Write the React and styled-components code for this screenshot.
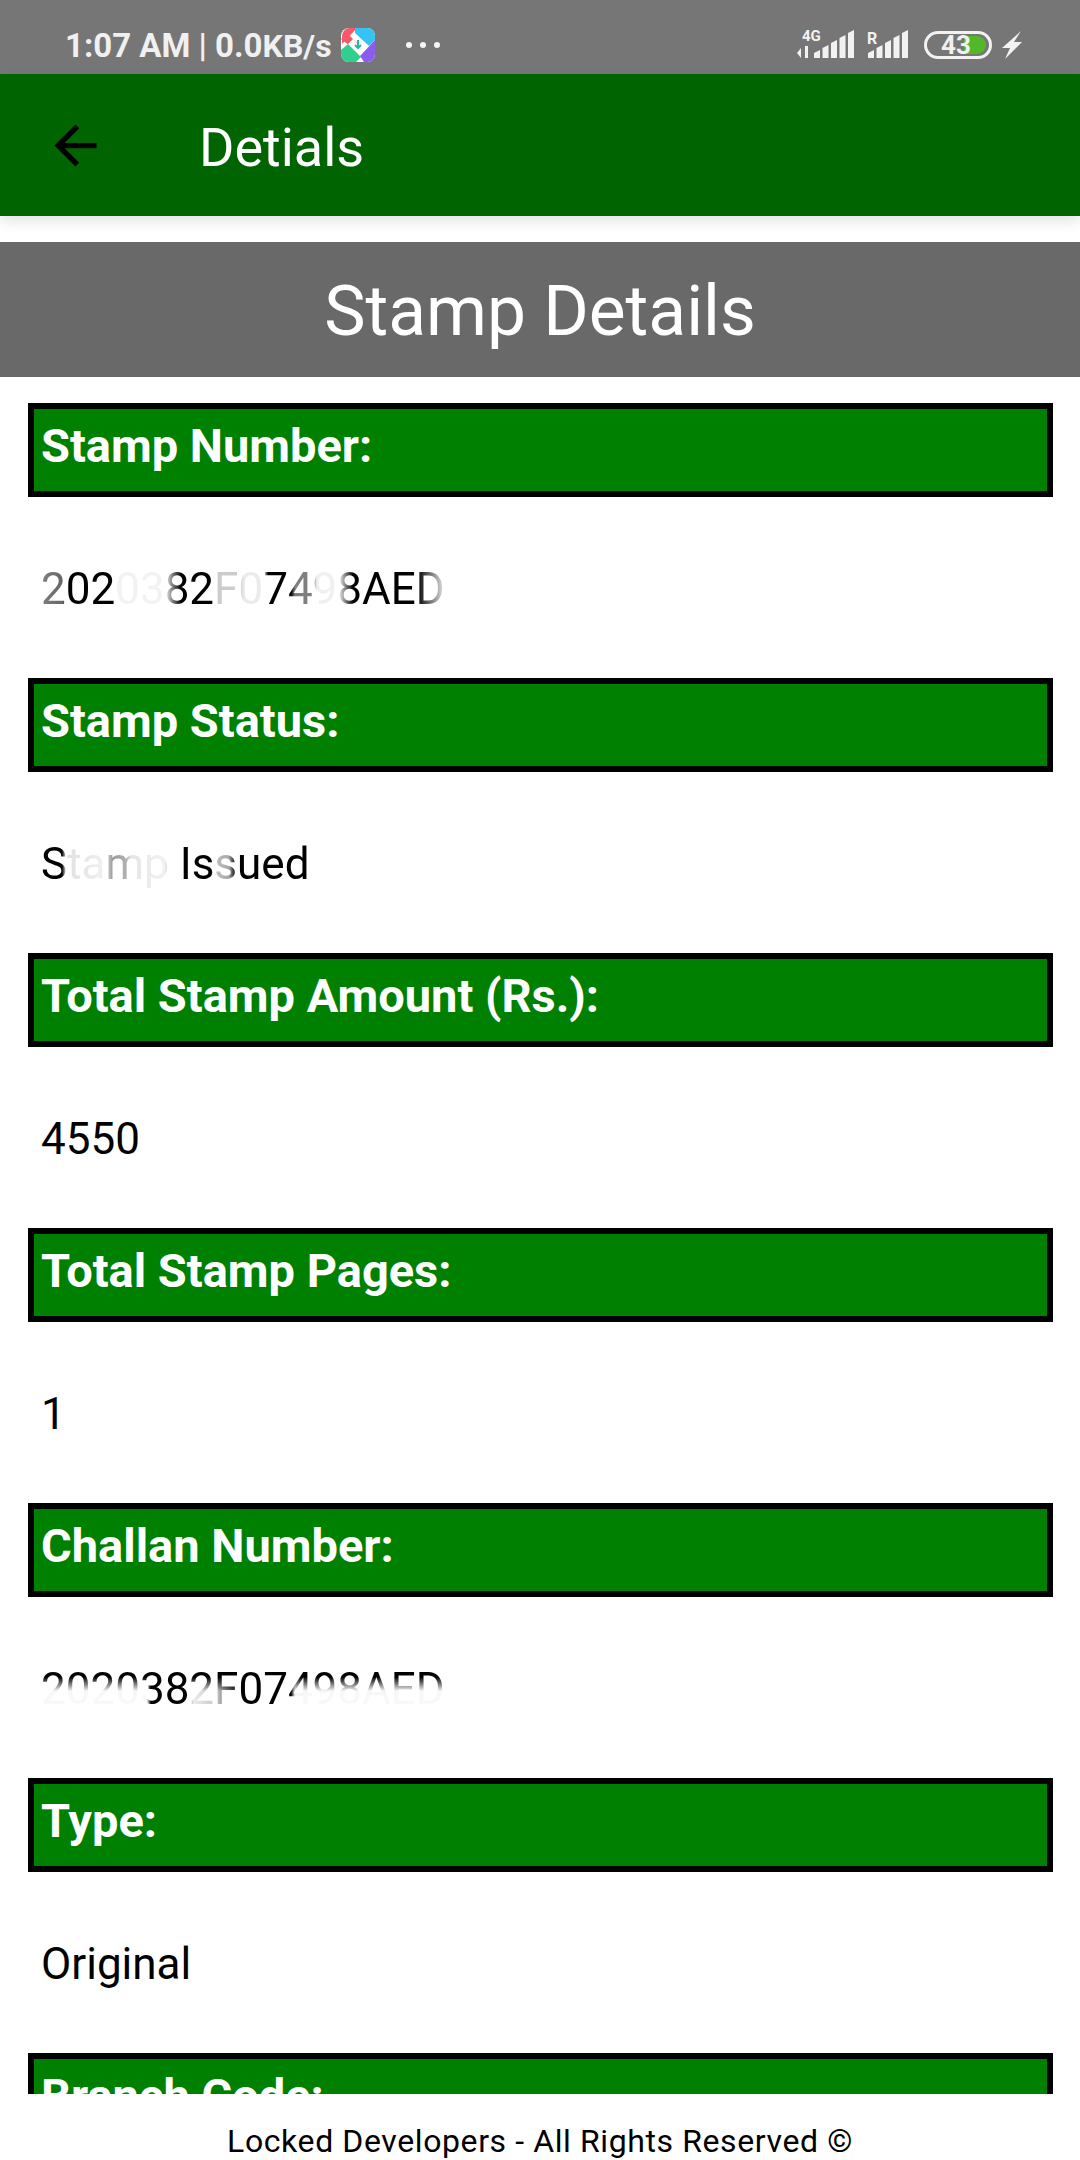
import React from "react"
import styled, { createGlobalStyle } from "styled-components"

const GlobalStyle = createGlobalStyle`
  html, body {
    margin: 0;
    padding: 0;
    background: #fff;
  }
  * {
    box-sizing: border-box;
  }
`

const Page = styled.div`
  width: 1080px;
  height: 2160px;
  display: flex;
  flex-direction: column;
  overflow: hidden;
  background: #fff;
  font-family: Roboto, "Liberation Sans", sans-serif;
`

const StatusBar = styled.div`
  height: 74px;
  flex: none;
  display: flex;
  align-items: center;
  justify-content: space-between;
  padding: 16px 58px 0 65px;
  background: #767676;
  color: #f0f0f0;
`

const StatusGroup = styled.div`
  display: flex;
  align-items: center;
`

const Clock = styled.span`
  font-size: 33px;
  font-weight: 700;
  white-space: nowrap;
`

const Speed = styled.span`
  font-size: 32px;
`

const AppIcon = styled.svg`
  width: 34px;
  height: 34px;
  margin-left: 9px;
`

const Dots = styled.svg`
  width: 34px;
  height: 8px;
  margin-left: 31px;
`

const SignalIcon = styled.svg`
  height: 30px;
  width: ${(p) => p.$width}px;
  margin-right: ${(p) => p.$gap}px;
  overflow: visible;
`

const Battery = styled.div`
  position: relative;
  width: 68px;
  height: 28px;
  border: 3px solid #f2f2f2;
  border-radius: 14px;
  display: flex;
  align-items: center;
  justify-content: center;
  font-size: 26px;
  font-weight: 700;
  margin-right: 10px;
  padding-right: 4px;
`

const BatteryFill = styled.span`
  position: absolute;
  top: 2px;
  bottom: 2px;
  right: 3px;
  width: 22px;
  border-radius: 0 10px 10px 0;
  background: #52b82a;
`

const BatteryText = styled.span`
  position: relative;
  line-height: 22px;
`

const Bolt = styled.svg`
  width: 20px;
  height: 28px;
`

const Header = styled.header`
  position: relative;
  height: 142px;
  flex: none;
  display: flex;
  align-items: center;
  padding-left: 44px;
  background: darkgreen;
  box-shadow: 0 6px 12px rgba(0, 0, 0, 0.1);
`

const BackArrow = styled.svg`
  width: 63px;
  height: 63px;
  flex: none;
  fill: #000;
`

const HeaderTitle = styled.h1`
  margin: 4px 0 0 92px;
  font-size: 54px;
  font-weight: 400;
  color: #fff;
`

const Banner = styled.div`
  margin-top: 26px;
  height: 135px;
  flex: none;
  display: flex;
  align-items: center;
  justify-content: center;
  padding-top: 4px;
  background: dimgray;
  color: #fff;
  font-size: 69.5px;
  font-weight: 400;
`

const Scroller = styled.main`
  flex: 1;
  min-height: 0;
  overflow: hidden;
  padding: 26px 27px 0 28px;
`

const Label = styled.div`
  height: 94px;
  border: 6px solid #000;
  background: green;
  color: #fff;
  padding: 6px 7px 0;
  font-size: 47px;
  font-weight: 700;
  line-height: 62px;
`

const ValueRow = styled.div`
  height: 181px;
  display: flex;
  align-items: center;
  padding: 2px 0 0 13px;
`

const Value = styled.span`
  font-size: 44px;
  line-height: 52px;
  color: #000;
  mask-image: ${(p) => p.$mask || "none"};
`

const Footer = styled.footer`
  height: 66px;
  flex: none;
  display: flex;
  align-items: flex-end;
  justify-content: center;
  padding-bottom: 1px;
  background: #fff;
  color: #000;
  font-size: 32px;
  letter-spacing: 0.6px;
  line-height: 36px;
`

// the reference has patches rubbed out of these values, masks rebuild that
const fade = (stops) =>
  `linear-gradient(to right, ${stops
    .map(([x, a]) => `rgba(0,0,0,${a}) ${x}px`)
    .join(", ")})`

const stampMask = fade([
  [0, 0.5], [22, 0.6], [25, 1], [73, 1], [77, 0.05], [124, 0.05], [140, 1], [172, 1], [176, 0.2],
  [199, 0.2], [203, 0.08], [223, 0.08], [227, 1], [250, 1], [254, 0.5], [272, 0.5], [276, 0.06],
  [298, 0.06], [312, 1], [376, 1], [400, 0.2],
])

const statusMask = fade([
  [0, 1], [21, 1], [25, 0.12], [62, 0.06], [72, 0.4], [85, 0.3], [90, 0.1], [124, 0.05], [134, 1],
  [170, 1], [175, 0.25], [188, 0.35], [195, 1], [270, 1],
])

const challanMask = `${fade([
  [0, 0], [106, 0], [110, 1], [148, 1], [152, 0.05], [176, 0.2], [200, 1], [250, 1], [254, 0],
])}, linear-gradient(to bottom, #000 14px, rgba(0,0,0,0.03) 28px, rgba(0,0,0,0.02) 100%)`

const rows = [
  { label: "Stamp Number:", value: "2020382F07498AED", mask: stampMask },
  { label: "Stamp Status:", value: "Stamp Issued", mask: statusMask },
  { label: "Total Stamp Amount (Rs.):", value: "4550" },
  { label: "Total Stamp Pages:", value: "1" },
  { label: "Challan Number:", value: "2020382F07498AED", mask: challanMask },
  { label: "Type:", value: "Original" },
  { label: "Branch Code:", value: "" },
]

const barTops = [22, 17, 12, 7, 2]

const Signal = ({ width, gap, x, children }) => (
  <SignalIcon $width={width} $gap={gap} viewBox={`0 0 ${width} 30`}>
    {children}
    {barTops.map((top, i) => {
      const left = x + i * 8.5
      return (
        <polygon
          key={top}
          points={`${left},28 ${left + 6},28 ${left + 6},${top - 2} ${left},${top + 1}`}
          fill="#f2f2f2"
        />
      )
    })}
  </SignalIcon>
)

const App = () => {
  return (
    <Page>
      <GlobalStyle />
      <StatusBar>
        <StatusGroup>
          <Clock>
            1:07 AM | 0.0<Speed>KB/s</Speed>
          </Clock>
          <AppIcon viewBox="0 0 34 34">
            <rect width="34" height="34" rx="8" fill="#fff" />
            <path d="M8 0h8L1 16V8a8 8 0 0 1 7-8z" fill="#f7596a" />
            <path d="M0 11 6 5l11 11-8 2z" fill="#f7596a" />
            <path d="M14 0h12a8 8 0 0 1 8 8v4l-6 6L14 5z" fill="#35c3f3" />
            <path d="M0 22l7-6 13 13-5 5H8a8 8 0 0 1-8-8z" fill="#2dd08f" />
            <path d="M34 12v14a8 8 0 0 1-8 8h-3l-4-6z" fill="#8a5cf0" />
            <path d="M12 11 22 21 17 25 7 16z" fill="#fff" />
            <path d="M17 12v8M14 17l3 3 3-3" stroke="#25b9a0" strokeWidth="2" fill="none" />
          </AppIcon>
          <Dots viewBox="0 0 34 8">
            <circle cx="3" cy="4" r="3" fill="#f5f5f5" />
            <circle cx="17" cy="4" r="3" fill="#f5f5f5" />
            <circle cx="31" cy="4" r="3" fill="#f5f5f5" />
          </Dots>
        </StatusGroup>
        <StatusGroup>
          <Signal width={57} gap={13} x={17}>
            <text x="5" y="11" fontFamily="Roboto, sans-serif" fontSize="15" fontWeight="700" fill="#f2f2f2">
              4G
            </text>
            <path d="M0 23l4-5v10zM8 16h3v12H8z" fill="#f2f2f2" />
          </Signal>
          <Signal width={41} gap={16} x={1}>
            <text x="0" y="14" fontFamily="Roboto, sans-serif" fontSize="16" fontWeight="700" fill="#f2f2f2">
              R
            </text>
          </Signal>
          <Battery>
            <BatteryFill />
            <BatteryText>43</BatteryText>
          </Battery>
          <Bolt viewBox="0 0 20 28">
            <path d="M19 0 0 17h8l-5 11 17-17h-8z" fill="#f2f2f2" />
          </Bolt>
        </StatusGroup>
      </StatusBar>

      <Header>
        <BackArrow viewBox="0 0 24 24">
          <path d="M20 11H7.83l5.59-5.59L12 4l-8 8 8 8 1.41-1.41L7.83 13H20v-2z" />
        </BackArrow>
        <HeaderTitle>Detials</HeaderTitle>
      </Header>

      <Banner>Stamp Details</Banner>

      <Scroller>
        {rows.map((row) => (
          <React.Fragment key={row.label}>
            <Label>{row.label}</Label>
            <ValueRow>
              <Value $mask={row.mask}>{row.value}</Value>
            </ValueRow>
          </React.Fragment>
        ))}
      </Scroller>

      <Footer>Locked Developers - All Rights Reserved ©</Footer>
    </Page>
  )
}

export default App
